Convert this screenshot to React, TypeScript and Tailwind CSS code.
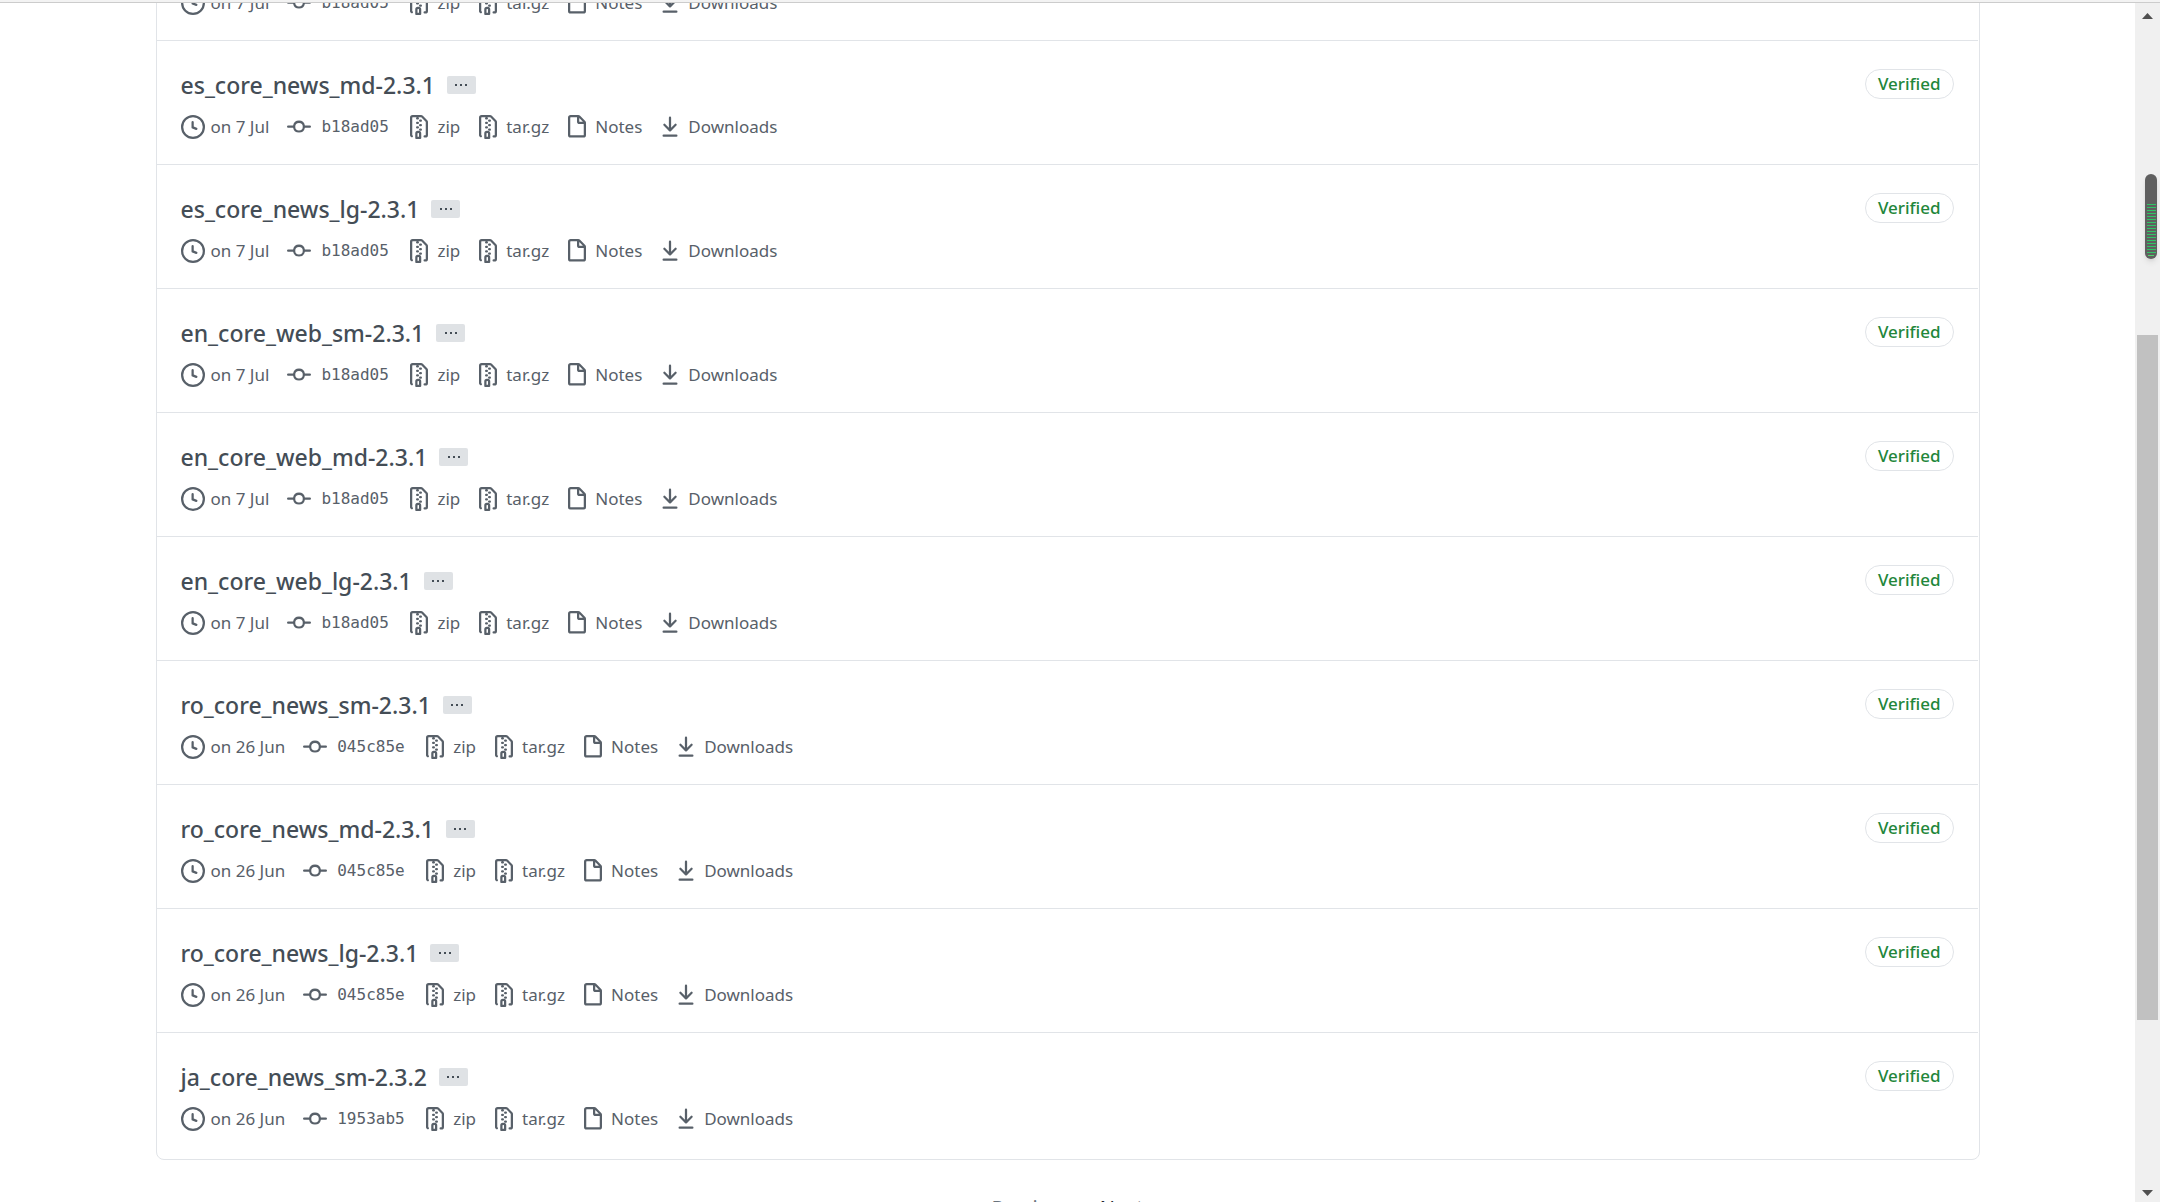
import React from "react";

const paths = {
  clock:
    "M1.5 8a6.5 6.5 0 1113 0 6.5 6.5 0 01-13 0zM8 0a8 8 0 100 16A8 8 0 008 0zm.5 4.75a.75.75 0 00-1.5 0v3.5a.75.75 0 00.471.696l2.5 1a.75.75 0 00.557-1.392L8.5 7.742V4.75z",
  commit:
    "M10.5 7.75a2.5 2.5 0 11-5 0 2.5 2.5 0 015 0zm1.43.75a4.002 4.002 0 01-7.86 0H.75a.75.75 0 110-1.5h3.32a4.001 4.001 0 017.86 0h3.32a.75.75 0 110 1.5h-3.32z",
  zip: "M3.5 1.75a.25.25 0 01.25-.25h3a.75.75 0 000 1.5h.5a.75.75 0 000-1.5h2.086a.25.25 0 01.177.073l2.914 2.914a.25.25 0 01.073.177v8.586a.25.25 0 01-.25.25h-.5a.75.75 0 000 1.5h.5A1.75 1.75 0 0014 13.25V4.664c0-.464-.184-.909-.513-1.237L10.573.513A1.75 1.75 0 009.336 0H3.75A1.75 1.75 0 002 1.75v11.5c0 .649.353 1.214.874 1.515a.75.75 0 10.752-1.298.25.25 0 01-.126-.217V1.75zM8.75 3a.75.75 0 000 1.5h.5a.75.75 0 000-1.5h-.5zM6 5.25a.75.75 0 01.75-.75h.5a.75.75 0 010 1.5h-.5A.75.75 0 016 5.25zm2 1.5A.75.75 0 018.75 6h.5a.75.75 0 010 1.5h-.5A.75.75 0 018 6.75zm-1.25.75a.75.75 0 000 1.5h.5a.75.75 0 000-1.5h-.5zM8 9.75A.75.75 0 018.75 9h.5a.75.75 0 010 1.5h-.5A.75.75 0 018 9.75zm-.75.75a1.75 1.75 0 00-1.75 1.75v3c0 .414.336.75.75.75h2.5a.75.75 0 00.75-.75v-3a1.75 1.75 0 00-1.75-1.75h-.5zM7 12.25a.25.25 0 01.25-.25h.5a.25.25 0 01.25.25v2.25H7v-2.25z",
  file: "M3.75 1.5a.25.25 0 00-.25.25v11.5c0 .138.112.25.25.25h8.5a.25.25 0 00.25-.25V6H9.75A1.75 1.75 0 018 4.25V1.5H3.75zm5.75.56v2.19c0 .138.112.25.25.25h2.19L9.5 2.06zM2 1.75C2 .784 2.784 0 3.75 0h5.086c.464 0 .909.184 1.237.513l3.414 3.414c.329.328.513.773.513 1.237v8.086A1.75 1.75 0 0112.25 15h-8.5A1.75 1.75 0 012 13.25V1.75z",
  download:
    "M7.47 10.78a.75.75 0 001.06 0l3.75-3.75a.75.75 0 00-1.06-1.06L8.75 8.44V1.75a.75.75 0 00-1.5 0v6.69L4.78 5.97a.75.75 0 00-1.06 1.06l3.75 3.75zM3.75 13a.75.75 0 000 1.5h8.5a.75.75 0 000-1.5h-8.5z",
};

function Icon({ name }: { name: keyof typeof paths }) {
  return (
    <svg viewBox="0 0 16 16" className="size-6 shrink-0 fill-current" aria-hidden="true">
      <path fillRule="evenodd" d={paths[name]} />
    </svg>
  );
}

type Tag = { name: string; date: string; sha: string };

const tags: Tag[] = [
  { name: "es_core_news_sm-2.3.1", date: "on 7 Jul", sha: "b18ad05" },
  { name: "es_core_news_md-2.3.1", date: "on 7 Jul", sha: "b18ad05" },
  { name: "es_core_news_lg-2.3.1", date: "on 7 Jul", sha: "b18ad05" },
  { name: "en_core_web_sm-2.3.1", date: "on 7 Jul", sha: "b18ad05" },
  { name: "en_core_web_md-2.3.1", date: "on 7 Jul", sha: "b18ad05" },
  { name: "en_core_web_lg-2.3.1", date: "on 7 Jul", sha: "b18ad05" },
  { name: "ro_core_news_sm-2.3.1", date: "on 26 Jun", sha: "045c85e" },
  { name: "ro_core_news_md-2.3.1", date: "on 26 Jun", sha: "045c85e" },
  { name: "ro_core_news_lg-2.3.1", date: "on 26 Jun", sha: "045c85e" },
  { name: "ja_core_news_sm-2.3.2", date: "on 26 Jun", sha: "1953ab5" },
];

function TagRow({ tag }: { tag: Tag }) {
  return (
    <li className="flex items-start justify-between border-t border-[#e1e4e8] px-6 pt-7 pb-[23px]">
      <div>
        <div className="flex h-8 items-center gap-3">
          <h4 className="text-[23px] leading-8 font-medium">
            <a href="#tag">{tag.name}</a>
          </h4>
          <button
            type="button"
            aria-label="Toggle commit message"
            className="flex h-[18px] w-[29px] items-center justify-center gap-[3px] rounded-xs bg-[#dfe2e5] text-[#444d56]"
          >
            <span className="size-[2px] bg-current" />
            <span className="size-[2px] bg-current" />
            <span className="size-[2px] bg-current" />
          </button>
        </div>
        <ul className="mt-3 flex h-7 items-center gap-4 text-[17px] leading-7 whitespace-nowrap text-[#586069]">
          <li className="flex items-center gap-[6px] pr-[2px]">
            <Icon name="clock" />
            {tag.date}
          </li>
          <li>
            <a href="#commit" className="flex items-center gap-[10px]">
              <Icon name="commit" />
              <span className="w-[70px] font-['DejaVu_Sans_Mono',monospace] text-[16px]">{tag.sha}</span>
            </a>
          </li>
          <li>
            <a href="#zip" className="flex items-center gap-[6px]">
              <Icon name="zip" />
              zip
            </a>
          </li>
          <li>
            <a href="#tar" className="flex items-center gap-[6px]">
              <Icon name="zip" />
              tar.gz
            </a>
          </li>
          <li>
            <a href="#notes" className="flex items-center gap-[6px]">
              <Icon name="file" />
              Notes
            </a>
          </li>
          <li>
            <a href="#downloads" className="flex items-center gap-[6px]">
              <Icon name="download" />
              Downloads
            </a>
          </li>
        </ul>
      </div>
      <button
        type="button"
        className="flex h-[30px] items-center rounded-full border border-[#e1e4e8] px-3 text-[17px] font-medium text-[#22863a]"
      >
        Verified
      </button>
    </li>
  );
}

function ScrollMeter() {
  return (
    <div className="absolute top-[171px] right-[3px] flex h-[85px] w-3 flex-col items-center gap-[2px] rounded-full bg-[#5f5f5f] pt-[30px] shadow-md">
      {Array.from({ length: 18 }, (_, i) => (
        <span key={i} className={i === 17 ? "h-px w-[6px] bg-[#4fd66a]" : "h-px w-[9px] bg-[#2fc465]"} />
      ))}
    </div>
  );
}

function Scrollbar() {
  return (
    <div className="relative flex w-[25px] shrink-0 flex-col items-center bg-[#f0f0f0]" aria-hidden="true">
      <svg viewBox="0 0 11 6" className="mt-[10px] h-[6px] w-[11px] shrink-0 fill-[#505050]">
        <path d="M5.5 0L11 6H0z" />
      </svg>
      <div className="grow-[316]" />
      <div className="w-[21px] grow-[685] bg-[#c1c1c1]" />
      <div className="grow-[170]" />
      <svg viewBox="0 0 11 6" className="mb-[6px] h-[6px] w-[11px] shrink-0 fill-[#505050]">
        <path d="M0 0h11L5.5 6z" />
      </svg>
      <ScrollMeter />
    </div>
  );
}

export default function App() {
  return (
    <div className="flex h-screen flex-col overflow-hidden bg-white font-['Noto_Sans',sans-serif] text-[#444d56]">
      <div className="h-[3px] shrink-0 border-b border-[#cccccc] bg-[#f3f3f3]" />
      <div className="flex min-h-0 flex-1">
        <main className="min-w-0 flex-1 overflow-hidden">
          <div className="mx-auto -mt-[88px] max-w-[1920px] px-12">
            <ul className="rounded-lg border border-[#e1e4e8] pr-px pb-[3px]">
              {tags.map((tag) => (
                <TagRow key={tag.name} tag={tag} />
              ))}
            </ul>
            <nav className="mt-6 flex justify-center gap-7 py-2 text-[20px] leading-8" aria-label="Pagination">
              <a href="#previous" className="text-[#6a737d]">
                Previous
              </a>
              <a href="#next" className="text-[#24292e]">
                Next
              </a>
            </nav>
          </div>
        </main>
        <Scrollbar />
      </div>
    </div>
  );
}
